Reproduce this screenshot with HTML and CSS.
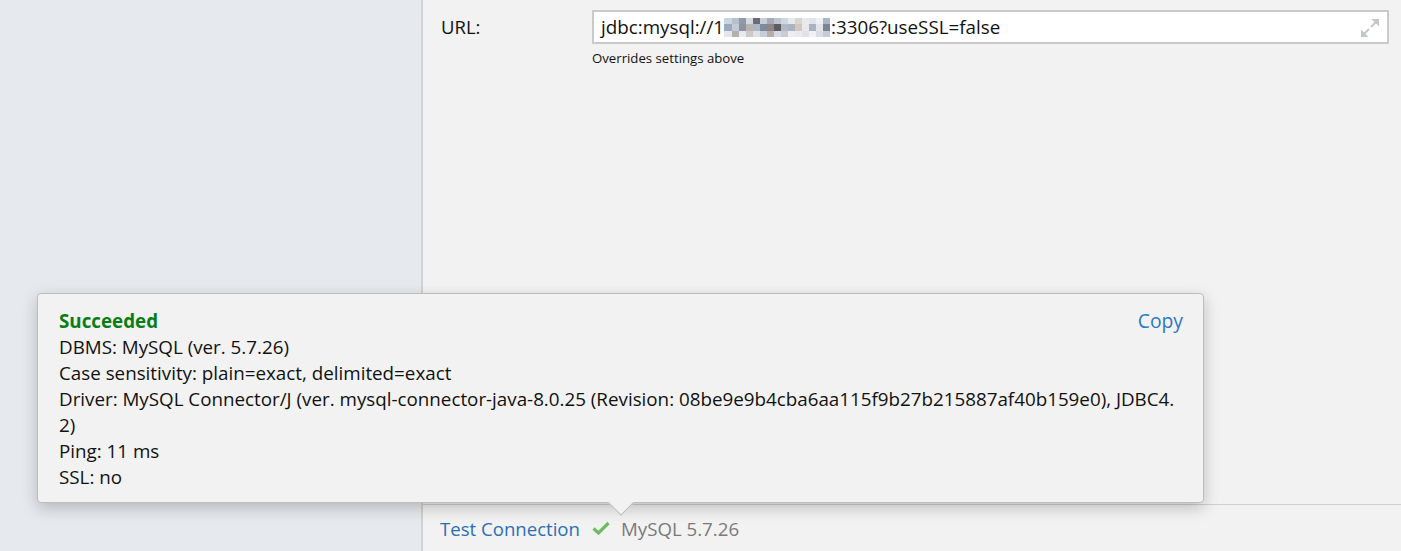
FILE: index.html
```html
<!DOCTYPE html>
<html>
<head>
<meta charset="utf-8">
<link rel="stylesheet" href="styles.css">
</head>
<body>
<div class="app">
  <aside class="sidebar"></aside>
  <main class="main">
    <div class="content">
      <div class="row">
        <label class="label">URL:</label>
        <div class="field">
          <div class="input">
            <span class="value">jdbc:mysql://1<svg class="mosaic" width="106" height="22" viewBox="0 0 106 22">
              <rect x="0" y="2" width="8" height="6" fill="#c9d4e4"/>
              <rect x="8" y="2" width="7" height="6" fill="#b7c0cd"/>
              <rect x="15" y="2" width="7" height="6" fill="#8f99a8"/>
              <rect x="22" y="2" width="7" height="6" fill="#d5d9e0"/>
              <rect x="29" y="2" width="7" height="6" fill="#6d6a78"/>
              <rect x="36" y="2" width="7" height="6" fill="#c8ced8"/>
              <rect x="43" y="2" width="7" height="6" fill="#a8aab5"/>
              <rect x="50" y="2" width="7" height="6" fill="#bfc4cc"/>
              <rect x="57" y="2" width="7" height="6" fill="#cfd6e2"/>
              <rect x="64" y="2" width="7" height="6" fill="#e6e8ec"/>
              <rect x="71" y="2" width="7" height="6" fill="#d9d4cc"/>
              <rect x="78" y="2" width="7" height="6" fill="#e8eaee"/>
              <rect x="85" y="2" width="7" height="6" fill="#dfe3ea"/>
              <rect x="92" y="2" width="7" height="6" fill="#eef0f3"/>
              <rect x="99" y="2" width="7" height="6" fill="#a9b6c8"/>
              <rect x="0" y="8" width="8" height="7" fill="#9aa9c2"/>
              <rect x="8" y="8" width="7" height="7" fill="#c4cad4"/>
              <rect x="15" y="8" width="7" height="7" fill="#8e93a0"/>
              <rect x="22" y="8" width="7" height="7" fill="#b9b4b2"/>
              <rect x="29" y="8" width="7" height="7" fill="#a9b6c8"/>
              <rect x="36" y="8" width="7" height="7" fill="#7f8a9a"/>
              <rect x="43" y="8" width="7" height="7" fill="#8e8588"/>
              <rect x="50" y="8" width="7" height="7" fill="#5f5b62"/>
              <rect x="57" y="8" width="7" height="7" fill="#b1b9c8"/>
              <rect x="64" y="8" width="7" height="7" fill="#aab3c0"/>
              <rect x="71" y="8" width="7" height="7" fill="#d4c7bc"/>
              <rect x="78" y="8" width="7" height="7" fill="#e7e9ed"/>
              <rect x="85" y="8" width="7" height="7" fill="#a8b2c4"/>
              <rect x="92" y="8" width="7" height="7" fill="#e1e5eb"/>
              <rect x="99" y="8" width="7" height="7" fill="#7d8594"/>
              <rect x="0" y="15" width="8" height="6" fill="#e3e6ea"/>
              <rect x="8" y="15" width="7" height="6" fill="#b4b0ae"/>
              <rect x="15" y="15" width="7" height="6" fill="#e7e9ec"/>
              <rect x="22" y="15" width="7" height="6" fill="#cfc8c4"/>
              <rect x="29" y="15" width="7" height="6" fill="#dde2ea"/>
              <rect x="36" y="15" width="7" height="6" fill="#c7cdd6"/>
              <rect x="43" y="15" width="7" height="6" fill="#b8aea7"/>
              <rect x="50" y="15" width="7" height="6" fill="#d6dbe3"/>
              <rect x="57" y="15" width="7" height="6" fill="#c9ccd4"/>
              <rect x="64" y="15" width="7" height="6" fill="#eceef1"/>
              <rect x="71" y="15" width="7" height="6" fill="#e9ebee"/>
              <rect x="78" y="15" width="7" height="6" fill="#dfe3e9"/>
              <rect x="85" y="15" width="7" height="6" fill="#f0f1f3"/>
              <rect x="92" y="15" width="7" height="6" fill="#d9dee6"/>
              <rect x="99" y="15" width="7" height="6" fill="#c5ccd8"/>
            </svg>:3306?useSSL=false</span>
            <svg class="expand" width="18" height="18" viewBox="0 0 18 18">
              <polygon points="10.5,0 18,0 18,7.5" fill="#c3c7cb"/>
              <line x1="14.5" y1="3.5" x2="10" y2="8" stroke="#c3c7cb" stroke-width="2"/>
              <polygon points="0,10.5 0,18 7.5,18" fill="#c3c7cb"/>
              <line x1="3.5" y1="14.5" x2="8" y2="10" stroke="#c3c7cb" stroke-width="2"/>
            </svg>
          </div>
          <div class="hint">Overrides settings above</div>
        </div>
      </div>
    </div>
    <footer class="footer">
      <a class="link">Test Connection</a>
      <svg class="check" width="18" height="14" viewBox="0 0 18 14">
        <path d="M1.5 7.5 L6.5 12 L16.5 2" fill="none" stroke="#6cbd60" stroke-width="3.2"/>
      </svg>
      <span class="version">MySQL 5.7.26</span>
    </footer>
  </main>
</div>
<div class="popup">
  <div class="popup-body">
    <div class="lines">
      <div class="ok">Succeeded</div>
      <div>DBMS: MySQL (ver. 5.7.26)</div>
      <div>Case sensitivity: plain=exact, delimited=exact</div>
      <div>Driver: MySQL Connector/J (ver. mysql-connector-java-8.0.25 (Revision: 08be9e9b4cba6aa115f9b27b215887af40b159e0), JDBC4.</div>
      <div>2)</div>
      <div>Ping: 11 ms</div>
      <div>SSL: no</div>
    </div>
    <a class="copy">Copy</a>
  </div>
  <div class="pointer"></div>
</div>
</body>
</html>
```
FILE: styles.css
```css
* { box-sizing: border-box; }
html, body { margin: 0; padding: 0; height: 100%; }
body {
  font-family: "Open Sans", "Noto Sans", sans-serif;
  background: #f2f2f2;
  color: #111;
  overflow: hidden;
}
.app {
  display: flex;
  height: 551px;
}
.sidebar {
  width: 423px;
  flex: none;
  background: #e6eaee;
  border-right: 2px solid #d2d2d2;
}
.main {
  flex: 1;
  display: flex;
  flex-direction: column;
  background: #f2f2f2;
}
.content {
  flex: 1;
  padding: 10px 12px 0 18px;
}
.row {
  display: flex;
  align-items: flex-start;
}
.label {
  width: 151px;
  font-size: 18.5px;
  line-height: 34px;
  color: #111;
}
.field {
  flex: 1;
}
.input {
  height: 34px;
  background: #fff;
  border: 2px solid #cacaca;
  display: flex;
  align-items: center;
  justify-content: space-between;
  padding: 0 8px 0 7px;
}
.value {
  font-size: 18.8px;
  color: #111;
  display: flex;
  align-items: center;
  white-space: nowrap;
}
.mosaic { display: block; margin: 0 1px 0 0; }
.expand { display: block; margin-top: 1px; }
.hint {
  font-size: 13.2px;
  margin-top: 5px;
  color: #111;
}
.footer {
  height: 47px;
  border-top: 1px solid #d0d0d0;
  display: flex;
  align-items: center;
  padding: 0 0 0 17px;
}
.link {
  color: #2b6fb3;
  font-size: 18.6px;
}
.check { margin-left: 12px; }
.version {
  margin-left: 11px;
  color: #7a7a7a;
  font-size: 18.7px;
}
.popup {
  position: absolute;
  left: 37px;
  top: 293px;
  width: 1167px;
  height: 210px;
  background: #f2f2f2;
  border: 1px solid #bdbdbd;
  border-radius: 4px;
  box-shadow: 0 5px 16px rgba(0, 0, 0, 0.22);
}
.popup-body {
  display: flex;
  justify-content: space-between;
  padding: 14px 20px 0 21px;
  font-size: 18.8px;
  line-height: 26px;
}
.lines {
  flex: 1;
  min-width: 0;
}
.lines div { white-space: nowrap; }
.ok {
  color: #0a7d16;
  font-weight: bold;
}
.copy {
  flex: none;
  color: #2b79c2;
  font-size: 19.3px;
}
.pointer {
  position: absolute;
  left: 574px;
  bottom: -10px;
  width: 18px;
  height: 18px;
  background: #f2f2f2;
  border-right: 1px solid #bdbdbd;
  border-bottom: 1px solid #bdbdbd;
  transform: rotate(45deg);
}
```
